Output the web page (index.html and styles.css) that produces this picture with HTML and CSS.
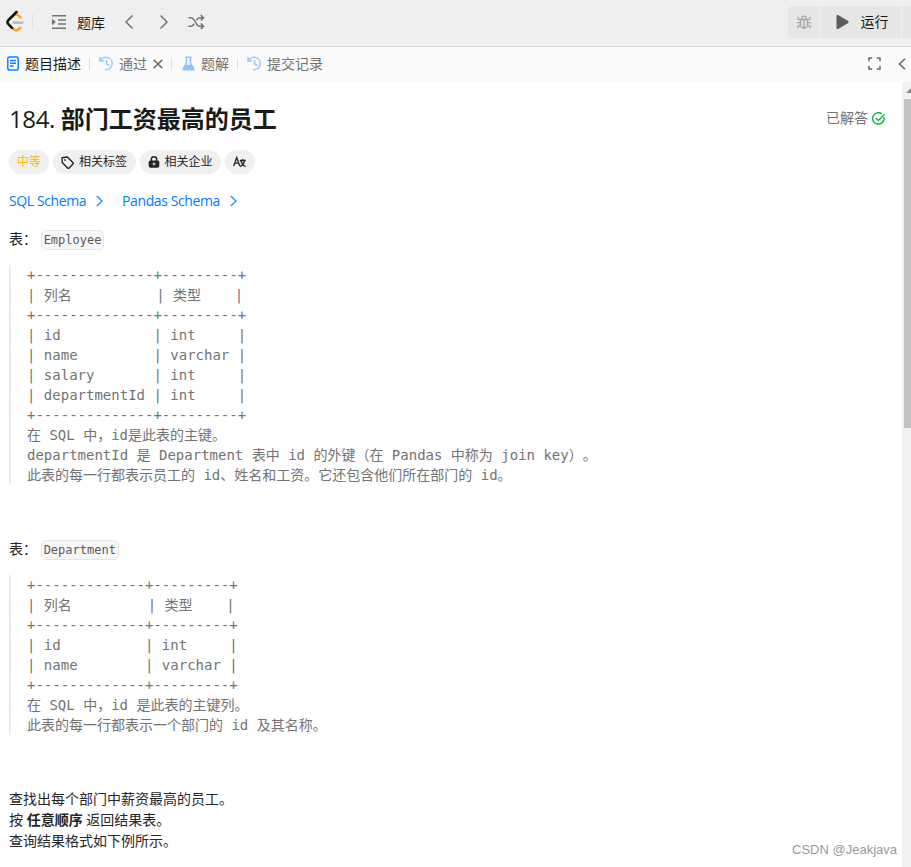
FILE: index.html
```
<!DOCTYPE html>
<html lang="zh-Hans">
<head>
    <meta charset="UTF-8">
    <meta name="viewport" content="width=device-width, initial-scale=1.0">
    <title>184. 部门工资最高的员工</title>
    <link rel="stylesheet" href="styles.css">
</head>
<body>
    <header class="navbar">
        <svg class="logo" width="18" height="22" viewBox="0 0 18 22" fill="none" stroke-linecap="round" stroke-linejoin="round">
            <path d="M5 8l3.700-3.200c1-.7 2-.5 2.800.1l3 2.600M5 17.200l3.200 2.500c1.200 1 2.400.9 3.500.1l2.600-2.200" stroke="#ffa116" stroke-width="2.300"/>
            <path d="M7.500 12.700h9" stroke="#b3b3b3" stroke-width="2.200"/>
            <path d="M10.500 2L2.400 10.200c-1.100 1.200-1.100 2.900 0 4l3.600 3.600" stroke="#111" stroke-width="2.500"/>
        </svg>
        <span class="divider"></span>
        <nav class="nav-links">
            <svg width="16" height="16" viewBox="0 0 16 16" fill="none" stroke="#737373" stroke-width="1.500">
                <path d="M1 1.800h14M7 6h8M7 10h8M1 14.200h14"/>
                <path d="M1 4.800v6.400L4.800 8z" fill="#737373" stroke="none"/>
            </svg>
            <span class="nav-title">题库</span>
            <svg class="prev" width="10" height="16" viewBox="0 0 10 16" fill="none" stroke="#737373" stroke-width="1.500"><path d="M8.500 1.500L2 8l6.500 6.500"/></svg>
            <svg class="next" width="10" height="16" viewBox="0 0 10 16" fill="none" stroke="#737373" stroke-width="1.500"><path d="M1.500 1.500L8 8l-6.500 6.500"/></svg>
            <svg class="shuffle" width="17" height="16" viewBox="0 0 17 16" fill="none" stroke="#737373" stroke-width="1.500">
                <path d="M.5 3.700h2.300c1.300 0 2 .5 2.700 1.500l3.600 5.500c.7 1 1.400 1.500 2.600 1.500h3.800M.5 12.200h2.300c1.300 0 2-.5 2.700-1.500l.7-1M8.500 6.200l.7-1c.7-1 1.400-1.500 2.500-1.500h3.800M12.800 1l2.800 2.700-2.800 2.700M12.800 9.500l2.800 2.700-2.800 2.700"/>
            </svg>
        </nav>
        <div class="run-group">
            <button class="btn btn-debug">
                <svg width="16" height="16" viewBox="0 0 16 16" fill="none" stroke="#a6a6a6" stroke-width="1.300">
                    <path d="M4.500 5.500h7v5a3.500 3.500 0 0 1-7 0zM5.500 5.300C5.500 1.200 10.500 1.200 10.500 5.300M8 6v8M1 8.700h3.500M11.500 8.700H15M4.500 6.200L2 5V2.800M11.500 6.200L14 5V2.800M4.500 11L2 12.300v2.200M11.500 11l2.500 1.300v2.200"/>
                </svg>
            </button>
            <button class="btn btn-run">
                <svg width="13" height="16" viewBox="0 0 13 16"><path d="M.500 2.200C.5.900 1.500.6 2.500 1.200l9.300 5.500c1 .6 1 2 0 2.600l-9.300 5.500c-1 .6-2 .2-2-1z" fill="#5c5c5c"/></svg>
                运行
            </button>
            <button class="btn btn-more"></button>
        </div>
    </header>

    <div class="tabs">
        <div class="tab active">
            <svg width="12" height="15" viewBox="0 0 12 15" fill="none" stroke="#0a84ff" stroke-width="1.500"><rect x=".8" y="1" width="10.400" height="13" rx="1.800"/><path d="M3 4.500h6M3 7.300h6M3 10.100h3.500"/></svg>
            题目描述
        </div>
        <div class="tab">
            <svg width="15" height="15" viewBox="0 0 15 15" fill="none" stroke="#99c9fb" stroke-width="1.500"><path d="M1 1v4h4M1.400 4.800A6.200 6.200 0 1 1 6 13.600M7.600 4v4l2.800 1.500"/></svg>
            通过
            <svg class="close" width="10" height="10" viewBox="0 0 10 10" fill="none" stroke="#666" stroke-width="1.500"><path d="M.7.7l8.600 8.600M9.300.7L.7 9.300"/></svg>
        </div>
        <div class="tab">
            <svg width="13" height="15" viewBox="0 0 13 15"><path d="M3.300 1.200h6.400M4.500 1v6L1.600 12.300M8.500 1v6l2.900 5.300" fill="none" stroke="#8dc3fc" stroke-width="1.500"/><path d="M3 8.700h7l2.500 4.200c.5.800 0 1.600-.9 1.600H1.400c-.9 0-1.400-.8-.9-1.600z" fill="#8dc3fc"/></svg>
            题解
        </div>
        <div class="tab">
            <svg width="15" height="15" viewBox="0 0 15 15" fill="none" stroke="#99c9fb" stroke-width="1.500"><path d="M1 1v4h4M1.400 4.800A6.200 6.200 0 1 1 6 13.600M7.600 4v4l2.800 1.500"/></svg>
            提交记录
        </div>
        <div class="tab-actions">
            <svg width="13" height="13" viewBox="0 0 13 13" fill="none" stroke="#666" stroke-width="1.500"><path d="M1 4.200V1h3.200M8.800 1H12v3.200M12 8.800V12H8.800M4.200 12H1V8.800"/></svg>
            <svg width="8" height="12" viewBox="0 0 8 12" fill="none" stroke="#666" stroke-width="1.500"><path d="M7 .7L1.500 6 7 11.300"/></svg>
        </div>
    </div>

    <div class="panel">
        <main class="content">
            <div class="title-row">
                <h1><span class="number">184. </span>部门工资最高的员工</h1>
                <div class="solved">
                    已解答
                    <svg width="13" height="13" viewBox="0 0 13 13" fill="none" stroke="#13b83c" stroke-width="1.500" stroke-linecap="round"><path d="M9.200 1.500A5.700 5.700 0 1 0 12 5.700M4.200 6.300l2.200 2.200L12 2.800"/></svg>
                </div>
            </div>

            <div class="tags">
                <span class="tag medium">中等</span>
                <span class="tag">
                    <svg width="13" height="13" viewBox="0 0 13 13" fill="none" stroke="#262626" stroke-width="1.400" stroke-linejoin="round"><path d="M1 1.800L6.300 1l5.600 5.600c.5.500.5 1 0 1.500l-3.700 3.800c-.5.500-1.100.5-1.600 0L1.200 6.500z"/><circle cx="4" cy="4" r=".6" fill="#262626" stroke-width=".6"/></svg>
                    相关标签
                </span>
                <span class="tag">
                    <svg width="12" height="12" viewBox="0 0 12 12"><path d="M3.300 5V3.500a2.700 2.700 0 0 1 5.400 0V5" fill="none" stroke="#262626" stroke-width="1.500"/><rect x=".7" y="4.500" width="10.600" height="7.200" rx="1.700" fill="#262626"/><path d="M6 6.500v3M4.500 8h3" stroke="#f0f0f0"/></svg>
                    相关企业
                </span>
                <span class="tag">
                    <svg width="13" height="12" viewBox="0 0 13 12" fill="none" stroke="#262626" stroke-width="1.300"><path d="M.7 10L3.700 1.500 6.700 10M1.700 7.200h4M6.800 4.500h5.900M9.700 3v1.500M8 4.700c.5 2.800 2 4.800 4.500 6M11.500 4.700c-.5 2.800-2 4.800-4.500 6"/></svg>
                </span>
            </div>

            <div class="schemas">
                <a class="schema">SQL Schema <svg width="7" height="12" viewBox="0 0 7 12" fill="none" stroke="#2990ff" stroke-width="1.400"><path d="M.8 1L6 6 .8 11"/></svg></a>
                <a class="schema">Pandas Schema <svg width="7" height="12" viewBox="0 0 7 12" fill="none" stroke="#2990ff" stroke-width="1.400"><path d="M.8 1L6 6 .8 11"/></svg></a>
            </div>

            <p class="table-name">表： <code>Employee</code></p>
            <pre>
+--------------+---------+
| 列名          | 类型    |
+--------------+---------+
| id           | int     |
| name         | varchar |
| salary       | int     |
| departmentId | int     |
+--------------+---------+
在 SQL 中，id是此表的主键。
departmentId 是 Department 表中 id 的外键（在 Pandas 中称为 join key）。
此表的每一行都表示员工的 id、姓名和工资。它还包含他们所在部门的 id。</pre>

            <p class="table-name">表： <code>Department</code></p>
            <pre>
+-------------+---------+
| 列名         | 类型    |
+-------------+---------+
| id          | int     |
| name        | varchar |
+-------------+---------+
在 SQL 中，id 是此表的主键列。
此表的每一行都表示一个部门的 id 及其名称。</pre>

            <p class="question">查找出每个部门中薪资最高的员工。<br>按 <strong>任意顺序</strong> 返回结果表。<br>查询结果格式如下例所示。</p>
        </main>
        <div class="scrollbar">
            <svg width="9" height="17" viewBox="0 0 9 17"><path d="M4 11l4.500-4.500L13 11z" fill="#8a8a8a"/></svg>
            <div class="thumb"></div>
        </div>
    </div>
    <div class="watermark">CSDN @Jeakjava</div>
</body>
</html>
```
FILE: styles.css
```
:root {
    --text-color: #262626;
    --muted-color: #737373;
    --nav-bg: #efefef;
    --tab-bg: #fafafa;
    --link-color: #007aff;
}

* {
    margin: 0;
    padding: 0;
    box-sizing: border-box;
}

body {
    position: relative;
    display: flex;
    flex-direction: column;
    height: 867px;
    overflow: hidden;
    font-family: "Open Sans", "Noto Sans CJK SC", sans-serif;
    font-size: 14px;
    line-height: 20px;
    color: var(--text-color);
    background: white;
}

svg {
    flex: none;
    display: block;
}

.navbar {
    display: flex;
    flex: none;
    align-items: center;
    height: 47px;
    padding-left: 6px;
    background: var(--nav-bg);
    border-bottom: 1px solid #d9d9d9;
}

.logo {
    margin-top: -4px;
}

.divider {
    width: 1px;
    height: 16px;
    margin: 0 18px 2px 8px;
    background: #e0e0e0;
}

.nav-links {
    display: flex;
    align-items: center;
    padding-bottom: 3px;
}

.nav-title {
    margin: 2px 0 0 10px;
    color: #1a1a1a;
}

.prev {
    margin-left: 19px;
}

.next {
    margin-left: 25px;
}

.shuffle {
    margin-left: 19px;
}

.run-group {
    display: flex;
    gap: 1px;
    height: 32px;
    margin: 0 0 3px auto;
}

.btn {
    display: flex;
    align-items: center;
    justify-content: center;
    border: none;
    background: #e6e6e6;
    font: inherit;
    color: #1a1a1a;
}

.btn-debug {
    width: 32px;
    border-radius: 5px 0 0 5px;
}

.btn-run {
    width: 80px;
    gap: 12px;
    padding-left: 2px;
}

.btn-more {
    width: 9px;
}

.tabs {
    display: flex;
    flex: none;
    align-items: center;
    height: 35px;
    padding: 0 0 2px 7px;
    background: var(--tab-bg);
    color: var(--muted-color);
}

.tab {
    display: flex;
    align-items: center;
    gap: 5px;
}

.tab + .tab::before {
    content: "";
    width: 1px;
    height: 12px;
    margin: 0 4px 0 8px;
    background: #e0e0e0;
}

.tab.active {
    gap: 6px;
    color: #1a1a1a;
}

.tab:nth-child(3) {
    gap: 6px;
}

.close {
    margin-left: 1px;
}

.tab-actions {
    display: flex;
    align-items: center;
    gap: 17px;
    margin-left: auto;
    padding-right: 5px;
}

.panel {
    display: flex;
    flex: 1;
    min-height: 0;
}

.content {
    flex: 1;
    min-width: 0;
    padding: 21px 17px 0 9px;
}

.title-row {
    display: flex;
    justify-content: space-between;
    height: 33px;
}

h1 {
    font-size: 24px;
    font-weight: 700;
    line-height: 32px;
    color: #1a1a1a;
}

.number {
    font-weight: 500;
    letter-spacing: -0.4px;
}

.solved {
    display: flex;
    align-items: center;
    gap: 4px;
    height: 30px;
    color: var(--muted-color);
}

.tags {
    display: flex;
    gap: 4px;
    margin-top: 14px;
}

.tag {
    display: flex;
    align-items: center;
    gap: 5px;
    height: 24px;
    padding: 0 8px;
    border-radius: 12px;
    background: #f0f0f0;
    font-size: 12px;
}

.tag + .tag {
    padding-right: 8.5px;
}

.tag.medium {
    color: #ffb800;
}

.schemas {
    display: flex;
    gap: 19px;
    margin-top: 17px;
}

.schema {
    display: flex;
    align-items: center;
    gap: 10px;
    letter-spacing: -0.4px;
    color: var(--link-color);
}

.table-name {
    margin-top: 17px;
    padding-top: 1px;
}

code {
    display: inline-block;
    height: 20px;
    padding: 0 2px;
    border: 1px solid #e5e5e5;
    border-radius: 5px;
    background: #f7f7f7;
    font-family: "DejaVu Sans Mono", monospace;
    font-size: 12px;
    line-height: 18px;
    color: #595959;
}

pre {
    margin: 15px 0 53px;
    padding-left: 16px;
    border-left: 2px solid #ebebeb;
    font-family: "DejaVu Sans Mono", "Noto Sans CJK SC", monospace;
    font-size: 14px;
    line-height: 20px;
    text-spacing-trim: space-all;
    color: var(--muted-color);
}

.question {
    line-height: 21px;
}

.scrollbar {
    width: 9px;
    background: #f1f1f1;
}

.thumb {
    height: 329px;
    margin-left: 2px;
    background: #c1c1c1;
}

.watermark {
    position: absolute;
    right: 14px;
    bottom: 7px;
    font-family: "Liberation Sans", Arial, sans-serif;
    font-size: 13px;
    color: #999;
}
```
